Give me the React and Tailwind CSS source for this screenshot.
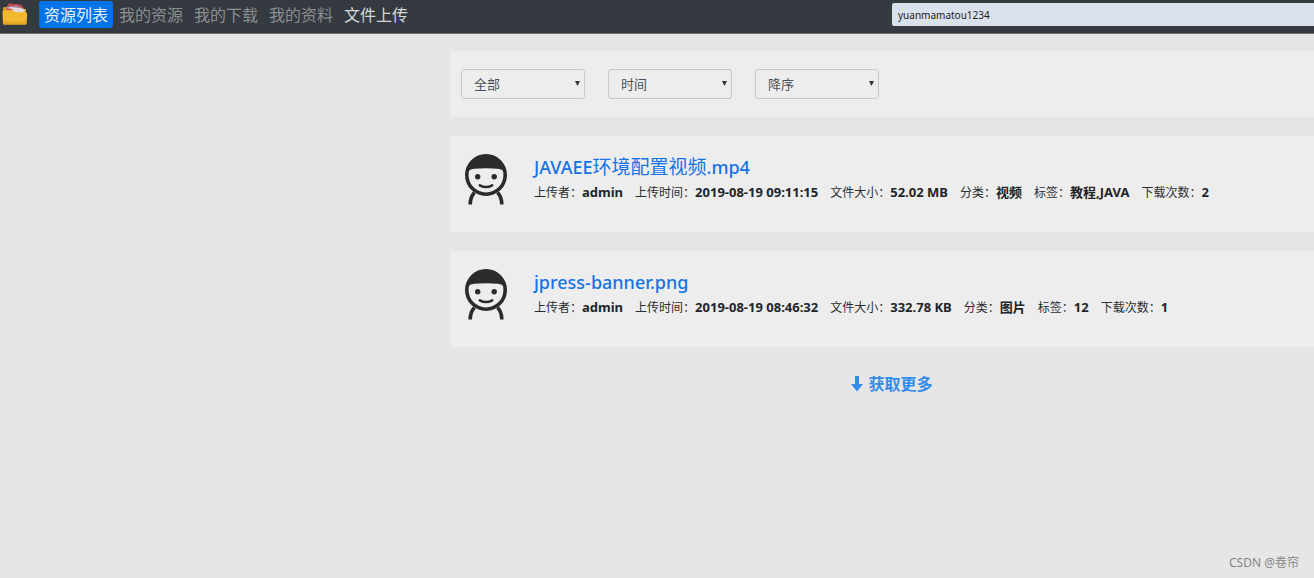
const navLinks = [
  { label: '资源列表', className: 'rounded-[3px] bg-[#0173e9] text-[#e9f1fa]' },
  { label: '我的资源', className: 'text-[#8b8e91]' },
  { label: '我的下载', className: 'text-[#8b8e91]' },
  { label: '我的资料', className: 'text-[#8b8e91]' },
  { label: '文件上传', className: 'text-[#d6d7d8]' },
];

const filters = [
  { name: '分类', options: ['全部', '视频', '图片'] },
  { name: '排序字段', options: ['时间', '大小'] },
  { name: '排序方式', options: ['降序', '升序'] },
];

const resources = [
  {
    title: 'JAVAEE环境配置视频.mp4',
    meta: [
      ['上传者', 'admin'],
      ['上传时间', '2019-08-19 09:11:15'],
      ['文件大小', '52.02 MB'],
      ['分类', '视频'],
      ['标签', '教程,JAVA'],
      ['下载次数', '2'],
    ],
  },
  {
    title: 'jpress-banner.png',
    meta: [
      ['上传者', 'admin'],
      ['上传时间', '2019-08-19 08:46:32'],
      ['文件大小', '332.78 KB'],
      ['分类', '图片'],
      ['标签', '12'],
      ['下载次数', '1'],
    ],
  },
];

function FolderLogo() {
  return (
    <svg viewBox="0 0 26 22" className="h-[22px] w-[26px]" aria-hidden="true">
      <path d="M1 9V5.500Q1 4 2.500 4H8l2 2h14v5H1z" fill="#d89a22" />
      <path d="M4 7 6 1.500Q6.500 0.500 8 0.600L18 1.500Q20 2 21 4l1 4H4z" fill="#c9474b" />
      <path d="M5 3.500 15 2.500 20 5v4H5z" fill="#a9869f" />
      <path d="M4 6.500 8 4l10 1 4.500 1v4H4z" fill="#e2d9df" />
      <path d="M4 5.500Q9 4.500 11.500 7.500L4 8z" fill="#d65a4a" />
      <path d="M0.500 9Q0.500 7.300 2 7.300H9.500Q11 7.300 12 8.300T14.500 9.300H23.500Q25.200 9.300 25.100 11L24.600 20Q24.500 21.500 23 21.500H2.500Q1 21.500 0.900 20z" fill="#f1b92c" />
      <path d="M1 18.500H24.700L24.600 20Q24.500 21.500 23 21.500H2.500Q1 21.500 0.900 20z" fill="#e5a721" />
    </svg>
  );
}

function Avatar() {
  return (
    <svg viewBox="0 0 42 51" className="h-[51px] w-[42px] shrink-0" aria-hidden="true">
      <circle cx="21" cy="21" r="19.200" fill="none" stroke="#2b2b2b" strokeWidth="3.600" />
      <path d="M1.500 16.500A20 20 0 0 1 40.500 16.500L38 16.500Q36 14.300 21 14.300T4 16.500z" fill="#2b2b2b" />
      <circle cx="12.700" cy="22.800" r="2.700" fill="#2b2b2b" />
      <circle cx="29.200" cy="22.800" r="2.700" fill="#2b2b2b" />
      <path d="M14.800 31.400Q21 34.800 27.200 31.400" fill="none" stroke="#2b2b2b" strokeWidth="2.500" strokeLinecap="round" />
      <path d="M9.500 38.500Q5.200 43 5.200 50.500M32.500 38.500Q36.800 43 36.800 50.500" fill="none" stroke="#2b2b2b" strokeWidth="3.600" />
    </svg>
  );
}

// Latin runs are set medium, Han runs regular, so that both look equally heavy.
function Title({ text }) {
  return text.split(/([\u4e00-\u9fff]+)/).map((run, i) =>
    i % 2 ? <span key={i} className="text-[19px] font-normal">{run}</span> : run
  );
}

function ResourceCard({ title, meta }) {
  return (
    <article className="flex h-24 gap-[27px] rounded-l-[3px] bg-[#ededed] pl-[15px] pt-[18px]">
      <Avatar />
      <div className="min-w-0">
        <h2 className="text-[18px] font-medium leading-[26px]">
          <a href="#resource" className="text-[#1673e6]"><Title text={title} /></a>
        </h2>
        <dl className="flex gap-3 whitespace-nowrap text-[12px] leading-6 text-[#2b2e31]">
          {meta.map(([label, value]) => (
            <div key={label} className="flex items-baseline">
              <dt>{label}：</dt>
              <dd className="text-[13px] font-bold text-[#212529]">{value}</dd>
            </div>
          ))}
        </dl>
      </div>
    </article>
  );
}

export default function App() {
  return (
    <div className="flex min-h-screen flex-col overflow-hidden bg-[#e6e6e6] font-['Noto_Sans','Noto_Sans_CJK_SC',sans-serif]">
      <header className="flex h-[34px] items-start border-b border-[#6f7276] bg-[#343a40]">
        <a href="#home" aria-label="首页" className="ml-[2px] mr-[11px] mt-[3px]">
          <FolderLogo />
        </a>
        <nav className="flex gap-px pt-px">
          {navLinks.map((link) => (
            <a key={link.label} href="#nav" className={`whitespace-nowrap px-[5px] pt-px text-[16px] leading-[26px] ${link.className}`}>
              {link.label}
            </a>
          ))}
        </nav>
        <div className="ml-auto mt-[3px] w-[422px]">
          <input
            type="text"
            aria-label="搜索"
            defaultValue="yuanmamatou1234"
            className="block h-[23px] w-full rounded-l-[2px] bg-[#d9e1ec] px-[6px] text-[10px] text-[#1b1d20] outline-none"
          />
        </div>
      </header>

      <main className="ml-[450px] flex flex-col gap-[19px] pt-[17px]">
        <form className="flex h-[66px] items-start gap-[23px] rounded-l-[3px] bg-[#ededed] pl-[11px] pt-[18px]">
          {filters.map((filter) => (
            <label key={filter.name} className="relative block w-[124px]">
              <select
                aria-label={filter.name}
                className="block h-[30px] w-full appearance-none rounded-[3px] border border-[#c6c8ca] bg-[#ededed] px-3 pt-[2px] text-[13px] text-[#495057] outline-none"
              >
                {filter.options.map((option) => (
                  <option key={option}>{option}</option>
                ))}
              </select>
              <svg viewBox="0 0 5 5" className="pointer-events-none absolute right-[5px] top-3 size-[5px]" aria-hidden="true">
                <path d="M0 0h5L2.500 5z" fill="#333" />
              </svg>
            </label>
          ))}
        </form>

        {resources.map((resource) => (
          <ResourceCard key={resource.title} {...resource} />
        ))}

        <button type="button" className="ml-5 mt-1 flex items-center justify-center gap-[5px] text-[16px] font-bold leading-7 text-[#338ceb]">
          <svg viewBox="0 0 12 16" className="h-4 w-3" aria-hidden="true">
            <path d="M4 0h4v8h4l-6 7.500L0 8h4z" fill="currentColor" />
          </svg>
          获取更多
        </button>
      </main>

      <footer className="mt-auto pb-[5px] pr-[15px] text-right text-[12px] leading-5 text-[#858585]">CSDN @卷帘</footer>
    </div>
  );
}
